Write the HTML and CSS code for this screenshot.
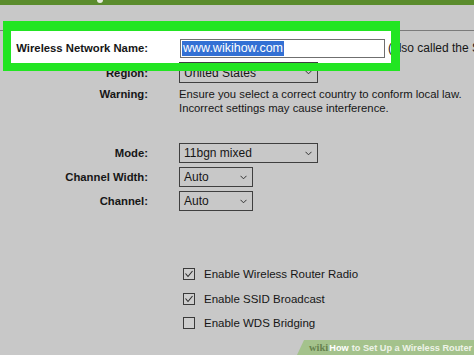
FILE: index.html
```html
<!DOCTYPE html>
<html lang="en">
<head>
    <meta charset="UTF-8">
    <meta name="viewport" content="width=device-width, initial-scale=1.0">
    <title>Wireless Settings</title>
    <link rel="stylesheet" href="styles.css">
</head>
<body>
    <div class="topbar"><span class="topbar-tail"></span></div>
    <div class="subbar"></div>

    <div class="settings">
        <!-- SSID row -->
        <div class="name-row">
            <span class="field-label">Wireless Network Name:</span>
            <div class="text-input"><span class="selected-text">www.wikihow.com</span></div>
            <span class="note">(also called the SSID)</span>
        </div>

        <div class="field-row region-row">
            <span class="field-label">Region:</span>
            <div class="select wide tall">
                <span>United States</span>
                <svg width="7" height="5" viewBox="0 0 7 5"><polyline points="0.5,0.8 3.5,3.8 6.5,0.8" fill="none" stroke="#333" stroke-width="1"/></svg>
            </div>
        </div>

        <div class="field-row warning-row">
            <span class="field-label">Warning:</span>
            <p class="warning-text">Ensure you select a correct country to conform local law.<br>Incorrect settings may cause interference.</p>
        </div>

        <div class="field-row mode-row">
            <span class="field-label">Mode:</span>
            <div class="select wide">
                <span>11bgn mixed</span>
                <svg width="7" height="5" viewBox="0 0 7 5"><polyline points="0.5,0.8 3.5,3.8 6.5,0.8" fill="none" stroke="#333" stroke-width="1"/></svg>
            </div>
        </div>

        <div class="field-row small-row">
            <span class="field-label">Channel Width:</span>
            <div class="select narrow">
                <span>Auto</span>
                <svg width="7" height="5" viewBox="0 0 7 5"><polyline points="0.5,0.8 3.5,3.8 6.5,0.8" fill="none" stroke="#333" stroke-width="1"/></svg>
            </div>
        </div>

        <div class="field-row small-row">
            <span class="field-label">Channel:</span>
            <div class="select narrow">
                <span>Auto</span>
                <svg width="7" height="5" viewBox="0 0 7 5"><polyline points="0.5,0.8 3.5,3.8 6.5,0.8" fill="none" stroke="#333" stroke-width="1"/></svg>
            </div>
        </div>

        <!-- Checkboxes -->
        <div class="check-list">
            <div class="check-row">
                <span class="checkbox"><svg width="10" height="10" viewBox="0 0 10 10"><polyline points="1.5,4.5 4,7.5 8.5,2" fill="none" stroke="#2a2a2a" stroke-width="1.1"/></svg></span>
                <span>Enable Wireless Router Radio</span>
            </div>
            <div class="check-row">
                <span class="checkbox"><svg width="10" height="10" viewBox="0 0 10 10"><polyline points="1.5,4.5 4,7.5 8.5,2" fill="none" stroke="#2a2a2a" stroke-width="1.1"/></svg></span>
                <span>Enable SSID Broadcast</span>
            </div>
            <div class="check-row">
                <span class="checkbox"></span>
                <span>Enable WDS Bridging</span>
            </div>
        </div>
    </div>

    <!-- green annotation box -->
    <div class="highlight"></div>

    <div class="watermark">
        <span class="wm-wiki">wiki</span><span class="wm-how">How</span><span class="wm-title">to Set Up a Wireless Router</span>
    </div>
</body>
</html>
```

FILE: styles.css
```css
/* General Styling */
body {
    margin: 0;
    width: 474px;
    height: 355px;
    overflow: hidden;
    position: relative;
    background-color: #c8c8c8;
    font-family: "Liberation Sans", Arial, sans-serif;
    color: #161616;
}

/* Header */
.topbar {
    height: 5px;
    background-color: #5b8c2d;
    display: flex;
}

.topbar-tail {
    margin-left: 97px;
    width: 6px;
    height: 3px;
    background-color: #e8ecdf;
    border-radius: 0 0 3px 3px;
}

.subbar {
    height: 25px;
    border-bottom: 1px solid #7b7b7b;
}

/* Labels */
.field-label {
    font-weight: bold;
    font-size: 11.3px;
    text-align: right;
    white-space: nowrap;
}

/* SSID row */
.name-row {
    display: flex;
    align-items: center;
    width: 380px;
    height: 32px;
    margin-left: 11px;
    padding-top: 2px;
    box-sizing: border-box;
    background-color: #ffffff;
}

.name-row .field-label {
    width: 137px;
    flex-shrink: 0;
}

.text-input {
    flex-shrink: 0;
    margin-left: 32px;
    width: 205px;
    height: 19px;
    box-sizing: border-box;
    border: 1px solid #6f6f6f;
    background-color: #ffffff;
    display: flex;
    align-items: center;
    padding-left: 1px;
}

.selected-text {
    background-color: #3370d4;
    color: #ffffff;
    font-size: 12.5px;
    line-height: 15px;
    padding: 0 1px;
}

.note {
    flex-shrink: 0;
    margin-left: 3px;
    font-size: 12px;
    white-space: nowrap;
}

/* Form rows */
.field-row {
    display: grid;
    grid-template-columns: 148px max-content;
    column-gap: 31px;
    align-items: center;
}

.region-row {
    margin-top: -1px;
}

.warning-row {
    margin-top: 4px;
    align-items: start;
    line-height: 14px;
}

.warning-text {
    margin: 0;
    font-size: 11.3px;
    white-space: nowrap;
}

.mode-row {
    margin-top: 28px;
}

.small-row {
    margin-top: 4px;
}

/* Select boxes */
.select {
    height: 20px;
    box-sizing: border-box;
    border: 1px solid #3f3f3f;
    display: flex;
    align-items: center;
    justify-content: space-between;
    padding: 0 5px 0 4px;
    font-size: 12px;
}

.select.tall {
    height: 21px;
}

.select.wide {
    width: 139px;
}

.select.narrow {
    width: 74px;
}

/* Checkboxes */
.check-list {
    margin-top: 51px;
    margin-left: 183px;
}

.check-row {
    display: flex;
    align-items: center;
    height: 24.5px;
    font-size: 11.5px;
}

.checkbox {
    width: 12px;
    height: 12px;
    box-sizing: border-box;
    border: 1px solid #3a3a3a;
    background-color: #cecece;
    margin-right: 9px;
    display: flex;
    align-items: center;
    justify-content: center;
}

/* Green annotation */
.highlight {
    position: absolute;
    left: 3px;
    top: 21px;
    width: 397px;
    height: 50px;
    box-sizing: border-box;
    border-style: solid;
    border-color: #22e522;
    border-width: 10px 9px 8px 8px;
}

/* Watermark */
.watermark {
    position: absolute;
    right: 0;
    bottom: 0;
    width: 177px;
    height: 15px;
    box-sizing: border-box;
    padding-left: 12px;
    background-color: #a4c28c;
    clip-path: polygon(7px 0, 100% 0, 100% 100%, 0 100%);
    display: flex;
    align-items: center;
    white-space: nowrap;
}

.wm-wiki {
    font-family: "Liberation Serif", serif;
    font-weight: bold;
    font-size: 10.5px;
    color: #67834f;
}

.wm-how {
    margin-left: 1px;
    font-weight: bold;
    font-size: 9.2px;
    color: #ffffff;
}

.wm-title {
    margin-left: 3px;
    font-weight: bold;
    font-size: 9.2px;
    color: #eef3e8;
}
```
